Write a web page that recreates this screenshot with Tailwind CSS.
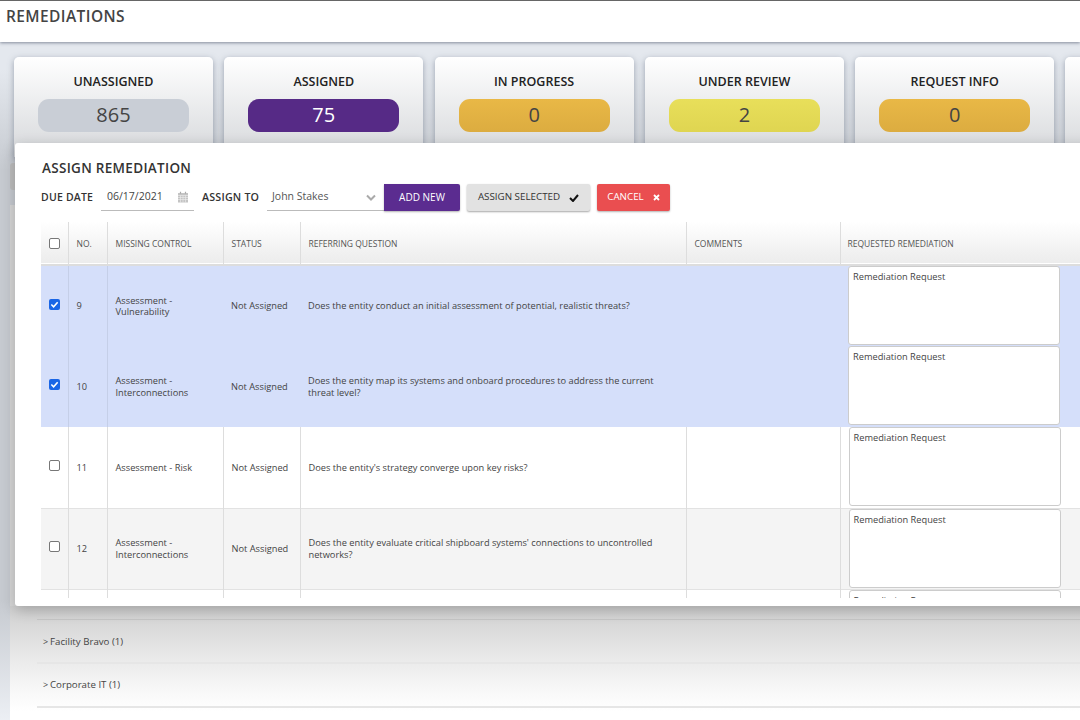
<!DOCTYPE html>
<html><head><meta charset="utf-8"><script src="https://cdn.jsdelivr.net/npm/@tailwindcss/browser@4"></script></head>
<body class="m-0">
<div class="relative w-[1080px] h-[720px] overflow-hidden flex flex-col bg-[linear-gradient(180deg,#e4e8ee_0px,#e4e8ee_70px,#c6cad0_170px,#c6cad0_600px,#eceff4_720px)] font-['Open_Sans',sans-serif] text-[#444]">
  <header class="h-[42px] shrink-0 bg-white border-t border-[#666] border-b-0 shadow-[0_1px_3px_rgba(90,100,120,0.7)] pl-[6px] pt-[5px] z-10">
    <h1 class="text-[15.5px] leading-[20px] font-semibold tracking-[0.4px] text-[#444]">REMEDIATIONS</h1>
  </header>
  <section class="flex gap-[11.3px] pl-[14px] pt-[15px] shrink-0 w-[1300px]">
    <div class="w-[199px] h-[100px] shrink-0 rounded-t-[5px] bg-gradient-to-b from-white to-[#d6d8db] shadow-[0_2px_6px_rgba(90,100,120,0.55)] flex flex-col items-center pt-[16px]">
      <span class="text-[12.5px] leading-[18px] font-semibold text-[#222]">UNASSIGNED</span>
      <span class="mt-[8px] w-[151px] h-[33px] rounded-[11px] bg-[#c9ced6] text-[#444] text-[20px] leading-[32px] text-center">865</span>
    </div>
    <div class="w-[199px] h-[100px] shrink-0 rounded-t-[5px] bg-gradient-to-b from-white to-[#d6d8db] shadow-[0_2px_6px_rgba(90,100,120,0.55)] flex flex-col items-center pt-[16px]">
      <span class="text-[12.5px] leading-[18px] font-semibold text-[#222]">ASSIGNED</span>
      <span class="mt-[8px] w-[151px] h-[33px] rounded-[11px] bg-[#562a86] text-white text-[20px] leading-[32px] text-center">75</span>
    </div>
    <div class="w-[199px] h-[100px] shrink-0 rounded-t-[5px] bg-gradient-to-b from-white to-[#d6d8db] shadow-[0_2px_6px_rgba(90,100,120,0.55)] flex flex-col items-center pt-[16px]">
      <span class="text-[12.5px] leading-[18px] font-semibold text-[#222]">IN PROGRESS</span>
      <span class="mt-[8px] w-[151px] h-[33px] rounded-[11px] bg-gradient-to-b from-[#e9b846] to-[#dcac40] text-[#444] text-[20px] leading-[32px] text-center">0</span>
    </div>
    <div class="w-[199px] h-[100px] shrink-0 rounded-t-[5px] bg-gradient-to-b from-white to-[#d6d8db] shadow-[0_2px_6px_rgba(90,100,120,0.55)] flex flex-col items-center pt-[16px]">
      <span class="text-[12.5px] leading-[18px] font-semibold text-[#222]">UNDER REVIEW</span>
      <span class="mt-[8px] w-[151px] h-[33px] rounded-[11px] bg-gradient-to-b from-[#e8df5a] to-[#dfd551] text-[#444] text-[20px] leading-[32px] text-center">2</span>
    </div>
    <div class="w-[199px] h-[100px] shrink-0 rounded-t-[5px] bg-gradient-to-b from-white to-[#d6d8db] shadow-[0_2px_6px_rgba(90,100,120,0.55)] flex flex-col items-center pt-[16px]">
      <span class="text-[12.5px] leading-[18px] font-semibold text-[#222]">REQUEST INFO</span>
      <span class="mt-[8px] w-[151px] h-[33px] rounded-[11px] bg-gradient-to-b from-[#e9b846] to-[#dcac40] text-[#444] text-[20px] leading-[32px] text-center">0</span>
    </div>
    <div class="w-[199px] h-[100px] shrink-0 rounded-t-[5px] bg-gradient-to-b from-white to-[#d6d8db] shadow-[0_2px_6px_rgba(90,100,120,0.55)]"></div>
  </section>
  <div class="ml-[10px] mt-[6px] h-[27px] w-[60px] shrink-0 rounded-l-[3px] bg-[#bdbdbd]"></div>
  <main class="ml-[10px] mt-[15px] flex-1 bg-[#d6d6d6] flex flex-col justify-end min-h-0">
    <div class="h-[114px] pt-[13px] pl-[27px] bg-[linear-gradient(180deg,#cfcfcf_0px,#dcdcdc_25px,#ebebeb_56px,#f8f8f8_85px,#ffffff_105px)]">
      <div class="h-[43px] border-t border-[#c6c6c6] flex items-center text-[9.7px] pt-[2px] text-[#444]"><span class="w-[6px] ml-[6px] mr-[1px] text-[9px]">&gt;</span><span>Facility Bravo (1)</span></div>
      <div class="h-[44px] border-t-2 border-[#e6e6e6] flex items-center text-[9.7px] text-[#444]"><span class="w-[6px] ml-[6px] mr-[1px] text-[9px]">&gt;</span><span>Corporate IT (1)</span></div>
      <div class="border-t-2 border-[#e6e6e6]"></div>
    </div>
  </main>

  <div class="absolute left-[15px] top-[143px] w-[1100px] h-[463px] bg-white rounded-[3px] shadow-[0_4px_14px_rgba(0,0,0,0.22)] z-20 pl-[26px] pt-[15px]">
    <h2 class="ml-[1px] text-[13.5px] leading-[20px] font-semibold tracking-[0.3px] text-[#333]">ASSIGN REMEDIATION</h2>
    <div class="flex items-center mt-[6px] h-[27px]">
      <span class="text-[10.5px] font-semibold tracking-[0.2px] text-[#333] w-[60px]">DUE DATE</span>
      <div class="w-[93px] h-[27px] border-b border-[#bbb] flex items-center justify-between pl-[6px] pr-[5px] text-[10.5px] text-[#444]">
        <span>06/17/2021</span>
        <svg class="w-[12px] h-[12px]" viewBox="0 0 12 12" fill="none"><rect x="1" y="2" width="10" height="9.5" fill="#c4c4c4"/><path d="M3.5 .8v2M8.500 .8v2" stroke="#aaa" stroke-width="1.200"/><path d="M1 4.500h10M1 6.500h10M1 8.500h10M3.500 4.500v7M6 4.500v7M8.500 4.500v7" stroke="#eee" stroke-width=".6"/></svg>
      </div>
      <span class="ml-[8px] w-[65px] text-[10.7px] font-semibold tracking-[0.2px] text-[#333]">ASSIGN TO</span>
      <div class="w-[117px] h-[27px] border-b border-[#bbb] flex items-center justify-between pl-[5px] pr-[8px] text-[10.5px] text-[#555]">
        <span>John Stakes</span>
        <svg class="w-[10px] h-[7px]" viewBox="0 0 10 7" fill="none"><path d="M1 1.500l4 4 4-4" stroke="#aaa" stroke-width="2"/></svg>
      </div>
      <button class="w-[76px] h-[27px] bg-[#5b2c90] text-white text-[10px] font-medium rounded-r-[2px] shadow-[0_1px_2px_rgba(0,0,0,0.3)]">ADD NEW</button>
      <button class="ml-[7px] w-[123px] h-[27px] bg-[#e2e2e2] text-[#333] text-[9.800px] font-medium rounded-[2px] shadow-[0_1px_2px_rgba(0,0,0,0.35)] flex items-center justify-center gap-[9px]">ASSIGN SELECTED <svg class="w-[10px] h-[8px]" viewBox="0 0 10 8" fill="none"><path d="M1 4l3 3 5-6" stroke="#111" stroke-width="2"/></svg></button>
      <button class="ml-[7px] w-[73px] h-[27px] bg-[#ea4e50] text-white text-[9.800px] font-medium rounded-[2px] shadow-[0_1px_2px_rgba(0,0,0,0.3)] flex items-center justify-center gap-[9px]">CANCEL <svg class="w-[7px] h-[7px]" viewBox="0 0 7 7" fill="none"><path d="M1 1l5 5M6 1l-5 5" stroke="#fff" stroke-width="1.800"/></svg></button>
    </div>
    <div class="mt-[11px] h-[376px] overflow-hidden">
      <table class="table-fixed border-collapse w-[1100px] text-[9.25px] leading-[11.5px] text-[#444]">
        <colgroup><col class="w-[27px]"><col class="w-[39px]"><col class="w-[116px]"><col class="w-[77px]"><col class="w-[386px]"><col class="w-[154px]"><col></colgroup>
        <thead>
          <tr class="h-[43px] bg-gradient-to-b from-white to-[#ececec] border-b-2 border-[#ddd] text-[8.5px] font-normal text-[#555] text-left">
            <th class="font-normal border-r border-[#ddd] text-center"><span class="inline-block align-middle w-[11px] h-[11px] border border-[#777] rounded-[2px] bg-white"></span></th>
            <th class="font-normal border-r border-[#ddd] pl-[8px] pt-[2px]">NO.</th>
            <th class="font-normal border-r border-[#ddd] pl-[8px] pt-[2px]">MISSING CONTROL</th>
            <th class="font-normal border-r border-[#ddd] pl-[8px] pt-[2px]">STATUS</th>
            <th class="font-normal border-r border-[#ddd] pl-[8px] pt-[2px]">REFERRING QUESTION</th>
            <th class="font-normal border-r border-[#ddd] pl-[8px] pt-[2px]">COMMENTS</th>
            <th class="font-normal pl-[7px] pt-[2px]">REQUESTED REMEDIATION</th>
          </tr>
        </thead>
        <tbody>
          <tr class="h-[81px] bg-[#d5dffa]">
            <td class="border-r border-[#c5cfe8] text-center pb-[5px]"><span class="inline-flex align-middle items-center justify-center w-[11px] h-[11px] rounded-[2px] bg-[#1a66e6]"><svg class="w-[9px] h-[9px]" viewBox="0 0 8 8" fill="none"><path d="M1.200 4l2 2 3.600-4" stroke="#fff" stroke-width="1.400"/></svg></span></td>
            <td class="border-r border-[#c5cfe8] pl-[8px]">9</td>
            <td class="pl-[8px] pr-[8px]">Assessment - Vulnerability</td>
            <td class="pl-[8px]">Not Assigned</td>
            <td class="pl-[8px] pr-[24px]">Does the entity conduct an initial assessment of potential, realistic threats?</td>
            <td></td>
            <td class="pl-[8px] pt-0 pb-0 align-top"><div class="w-[212px] h-[79px] bg-white rounded-[3px] border border-[#ccc] pl-[4px] pt-[4px]">Remediation Request</div></td>
          </tr>
          <tr class="h-[81px] bg-[#d5dffa]">
            <td class="border-r border-[#c5cfe8] text-center pb-[5px]"><span class="inline-flex align-middle items-center justify-center w-[11px] h-[11px] rounded-[2px] bg-[#1a66e6]"><svg class="w-[9px] h-[9px]" viewBox="0 0 8 8" fill="none"><path d="M1.200 4l2 2 3.600-4" stroke="#fff" stroke-width="1.400"/></svg></span></td>
            <td class="border-r border-[#c5cfe8] pl-[8px]">10</td>
            <td class="pl-[8px] pr-[8px]">Assessment - Interconnections</td>
            <td class="pl-[8px]">Not Assigned</td>
            <td class="pl-[8px] pr-[24px]">Does the entity map its systems and onboard procedures to address the current threat level?</td>
            <td></td>
            <td class="pl-[8px] pt-0 pb-0 align-top"><div class="w-[212px] h-[79px] bg-white rounded-[3px] border border-[#ccc] pl-[4px] pt-[4px]">Remediation Request</div></td>
          </tr>
          <tr class="h-[81px] bg-white border-b border-[#e2e2e2]">
            <td class="border-r border-[#ddd] text-center pb-[5px]"><span class="inline-block align-middle w-[11px] h-[11px] border border-[#777] rounded-[2px] bg-white"></span></td>
            <td class="border-r border-[#ddd] pl-[8px]">11</td>
            <td class="border-r border-[#ddd] pl-[8px] pr-[8px]">Assessment - Risk</td>
            <td class="border-r border-[#ddd] pl-[8px]">Not Assigned</td>
            <td class="border-r border-[#ddd] pl-[8px] pr-[24px]">Does the entity's strategy converge upon key risks?</td>
            <td class="border-r border-[#ddd]"></td>
            <td class="pl-[8px] pt-0 pb-0 align-top"><div class="w-[212px] h-[79px] bg-white rounded-[3px] border border-[#ccc] pl-[4px] pt-[4px]">Remediation Request</div></td>
          </tr>
          <tr class="h-[81px] bg-[#f4f4f4] border-b border-[#e2e2e2]">
            <td class="border-r border-[#ddd] text-center pb-[5px]"><span class="inline-block align-middle w-[11px] h-[11px] border border-[#777] rounded-[2px] bg-white"></span></td>
            <td class="border-r border-[#ddd] pl-[8px]">12</td>
            <td class="border-r border-[#ddd] pl-[8px] pr-[8px]">Assessment - Interconnections</td>
            <td class="border-r border-[#ddd] pl-[8px]">Not Assigned</td>
            <td class="border-r border-[#ddd] pl-[8px] pr-[24px]">Does the entity evaluate critical shipboard systems' connections to uncontrolled networks?</td>
            <td class="border-r border-[#ddd]"></td>
            <td class="pl-[8px] pt-0 pb-0 align-top"><div class="w-[212px] h-[79px] bg-white rounded-[3px] border border-[#ccc] pl-[4px] pt-[4px]">Remediation Request</div></td>
          </tr>
          <tr class="h-[81px] bg-white">
            <td class="border-r border-[#ddd]"></td><td class="border-r border-[#ddd]"></td><td class="border-r border-[#ddd]"></td><td class="border-r border-[#ddd]"></td><td class="border-r border-[#ddd]"></td><td class="border-r border-[#ddd]"></td>
            <td class="pl-[8px] pt-0 pb-0 align-top"><div class="w-[212px] h-[79px] bg-white rounded-[3px] border border-[#ccc] pl-[4px] pt-[4px]">Remediation Request</div></td>
          </tr>
        </tbody>
      </table>
    </div>
  </div>
</div>
</body></html>
